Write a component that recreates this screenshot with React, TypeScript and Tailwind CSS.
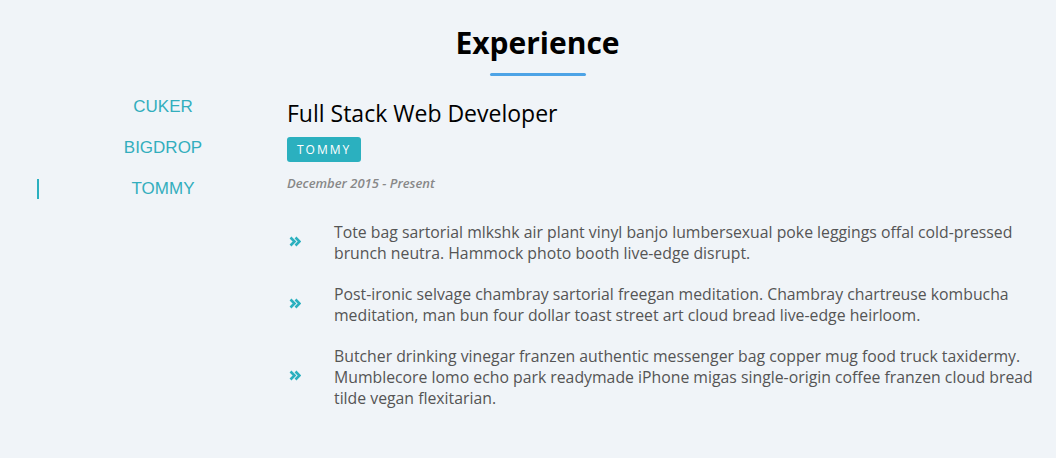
import React from "react";

const bullets = [
  "Tote bag sartorial mlkshk air plant vinyl banjo lumbersexual poke leggings offal cold-pressed brunch neutra. Hammock photo booth live-edge disrupt.",
  "Post-ironic selvage chambray sartorial freegan meditation. Chambray chartreuse kombucha meditation, man bun four dollar toast street art cloud bread live-edge heirloom.",
  "Butcher drinking vinegar franzen authentic messenger bag copper mug food truck taxidermy. Mumblecore lomo echo park readymade iPhone migas single-origin coffee franzen cloud bread tilde vegan flexitarian.",
];

function Chevrons() {
  return (
    <svg width="12" height="11" viewBox="0 0 12 11" className="shrink-0">
      <path d="M1.5 1.5 L5.5 5.5 L1.5 9.5" fill="none" stroke="#2bb0bf" strokeWidth="2.6" strokeLinejoin="miter" />
      <path d="M6.5 1.5 L10.5 5.5 L6.5 9.5" fill="none" stroke="#2bb0bf" strokeWidth="2.6" strokeLinejoin="miter" />
    </svg>
  );
}

export default function App() {
  return (
    <div className="w-[1056px] h-[458px] bg-[#f0f4f8] overflow-hidden" style={{ fontFamily: '"Open Sans", sans-serif' }}>
      <div className="flex flex-col items-center pt-[23px] pl-[19px]">
        <h2 className="text-[30px] leading-[40px] font-bold text-black">Experience</h2>
        <div className="mt-[10px] w-[96px] h-[3px] bg-[#4da3e6] rounded-full"></div>
      </div>
      <div className="flex pt-[19px] pl-[37px]">
        <nav className="w-[250px] flex flex-col gap-[21px] pt-[2px]" style={{ fontFamily: '"Liberation Sans", Arial, sans-serif' }}>
          {["CUKER", "BIGDROP", "TOMMY"].map((n, i) => (
            <div
              key={n}
              className={`text-[17px] leading-[20px] text-center text-[#33aebd] border-l-2 ${i === 2 ? "border-[#2bb0bf]" : "border-transparent"}`}
            >
              {n}
            </div>
          ))}
        </nav>
        <div className="w-[748px] pt-[3px]">
          <h3 className="text-[23px] leading-[30px] text-black">Full Stack Web Developer</h3>
          <div className="mt-[9px] inline-flex items-center h-[25px] px-[10px] rounded-[3px] bg-[#2bb0bf] text-white text-[12px] tracking-[2px]">
            TOMMY
          </div>
          <div className="mt-[13px] text-[13px] leading-[17px] italic font-semibold text-[#888]">December 2015 - Present</div>
          <ul className="mt-[30px] flex flex-col gap-[20px]">
            {bullets.map((b, i) => (
              <li key={i} className="flex items-center">
                <div className="w-[47px] pl-[2px] -mt-[4px]"><Chevrons /></div>
                <p className="flex-1 text-[15.8px] leading-[21px] text-[#555]">{b}</p>
              </li>
            ))}
          </ul>
        </div>
      </div>
    </div>
  );
}
